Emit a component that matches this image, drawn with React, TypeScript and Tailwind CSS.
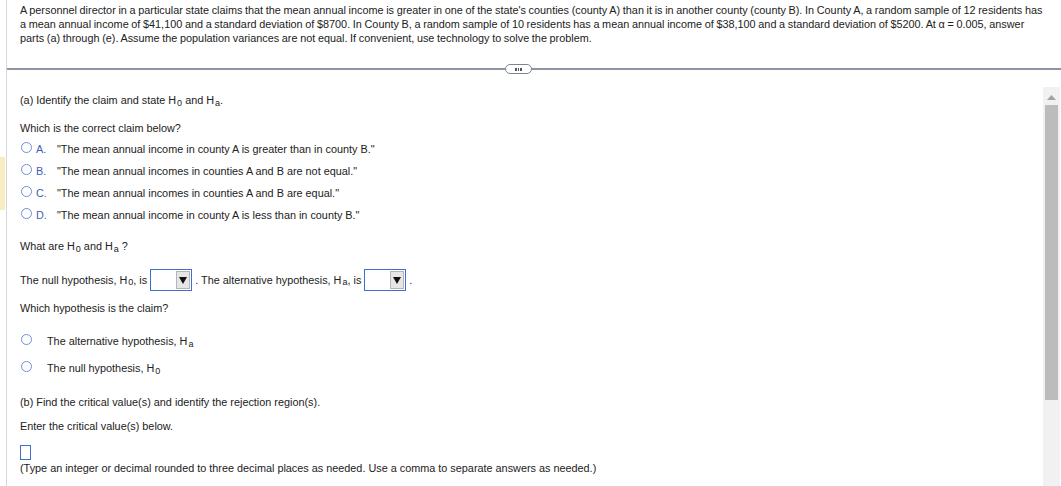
const font = { fontFamily: '"Liberation Sans", Arial, sans-serif' }

function Radio() {
  return <span className="inline-block w-[11px] h-[11px] rounded-full border border-[#6f8fd8] bg-white shrink-0" />
}

function Select() {
  return (
    <span className="inline-flex items-center justify-end w-[42px] h-[22px] border border-[#3d6fcf] bg-white align-middle mx-[3px] pr-[1px]">
      <span className="flex items-center justify-center w-[14px] h-[18px] bg-[#e6e6e6] border border-[#b5b5b5]">
        <svg width="8" height="7" viewBox="0 0 8 7"><path d="M0 0h8L4 7z" fill="#111" /></svg>
      </span>
    </span>
  )
}

const Sub = ({ c }: { c: string }) => <sub className="text-[9px] relative top-[2px] ml-[1px]">{c}</sub>

const claims = [
  ['A.', '"The mean annual income in county A is greater than in county B."'],
  ['B.', '"The mean annual incomes in counties A and B are not equal."'],
  ['C.', '"The mean annual incomes in counties A and B are equal."'],
  ['D.', '"The mean annual income in county A is less than in county B."'],
]

export default function App() {
  return (
    <div className="w-[1061px] h-[486px] overflow-hidden bg-white text-[10.85px] leading-[14px] text-[#222] relative" style={font}>
      <div className="absolute left-[6px] top-0 bottom-0 w-px bg-[#d3d7de]" />
      <div className="absolute left-0 top-[157px] w-[5px] h-[53px] bg-[#f8ecc2]" />
      <div className="pl-[20px] pr-[14px] pt-[3px] [word-spacing:-0.35px]">
        A personnel director in a particular state claims that the mean annual income is greater in one of the state's counties (county A) than it is in another county (county B). In County A, a random sample of 12 residents has a mean annual income of $41,100 and a standard deviation of $8700. In County B, a random sample of 10 residents has a mean annual income of $38,100 and a standard deviation of $5200. At α = 0.005, answer parts (a) through (e). Assume the population variances are not equal. If convenient, use technology to solve the problem.
      </div>
      <div className="relative mt-[23px] ml-[7px] h-[2px] bg-[#8d95a4]">
        <span className="absolute left-[498px] top-[-4px] w-[27px] h-[10px] rounded-[5px] border border-[#7d8594] bg-white flex items-center justify-center gap-[1px]">
          <span className="w-[1.5px] h-[3px] bg-[#555]" />
          <span className="w-[1.5px] h-[3px] bg-[#555]" />
          <span className="w-[1.5px] h-[3px] bg-[#555]" />
        </span>
      </div>
      <div className="flex mt-[17px]">
        <div className="flex-1 pl-[20px]">
          <div className="mt-[6px]">(a) Identify the claim and state H<Sub c="0" /> and H<Sub c="a" />.</div>
          <div className="mt-[14px]">Which is the correct claim below?</div>
          <div className="mt-[7px] flex flex-col gap-[8px]">
            {claims.map(([l, t]) => (
              <div key={l} className="flex items-center">
                <span className="ml-[1px]"><Radio /></span>
                <span className="ml-[4px] w-[21px] text-[#3d5fb8]">{l}</span>
                <span>{t}</span>
              </div>
            ))}
          </div>
          <div className="mt-[17px]">What are H<Sub c="0" /> and H<Sub c="a" /> ?</div>
          <div className="mt-[16px] flex items-center">
            The null hypothesis, H<Sub c="0" />, is <Select />. The alternative hypothesis, H<Sub c="a" />, is <Select />.
          </div>
          <div className="mt-[10px]">Which hypothesis is the claim?</div>
          <div className="mt-[19px] flex flex-col gap-[13px]">
            <div className="flex items-center"><span className="ml-[1px]"><Radio /></span><span className="ml-[15px]">The alternative hypothesis, H<Sub c="a" /></span></div>
            <div className="flex items-center"><span className="ml-[1px]"><Radio /></span><span className="ml-[15px]">The null hypothesis, H<Sub c="0" /></span></div>
          </div>
          <div className="mt-[20px]">(b) Find the critical value(s) and identify the rejection region(s).</div>
          <div className="mt-[10px]">Enter the critical value(s) below.</div>
          <div className="mt-[12px] w-[11px] h-[15px] border border-[#3d6fcf]" />
          <div className="mt-[1px]">(Type an integer or decimal rounded to three decimal places as needed. Use a comma to separate answers as needed.)</div>
        </div>
        <div className="w-[17px] mr-[1px] h-[400px] bg-[#f1f1f1] flex flex-col items-center">
          <svg width="9" height="5" viewBox="0 0 9 5" className="mt-[8px]"><path d="M0 5L4.5 0L9 5z" fill="#a3a3a3" /></svg>
          <div className="mt-[5px] w-[13px] h-[295px] bg-[#bcbcbc]" />
        </div>
      </div>
    </div>
  )
}
